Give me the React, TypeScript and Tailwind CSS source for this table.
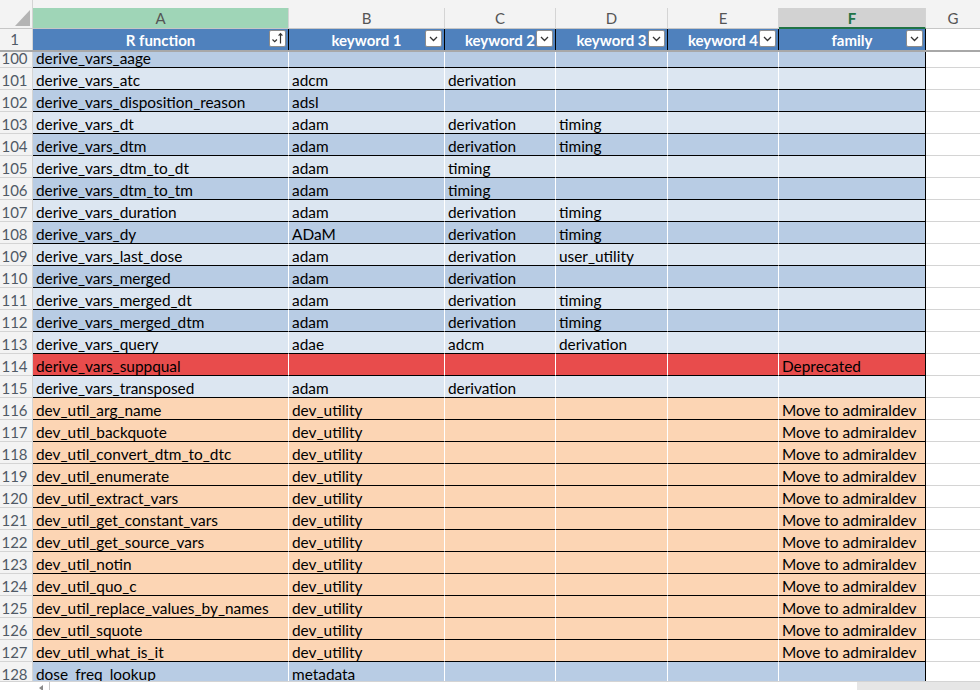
import React from 'react';

type Kind = 'dark' | 'light' | 'red' | 'peach';
type R = { n: number; a: string; b?: string; c?: string; d?: string; e?: string; f?: string; kind: Kind };

const rows: R[] = [
  { n: 101, a: 'derive_vars_atc', b: 'adcm', c: 'derivation', kind: 'light' },
  { n: 102, a: 'derive_vars_disposition_reason', b: 'adsl', kind: 'dark' },
  { n: 103, a: 'derive_vars_dt', b: 'adam', c: 'derivation', d: 'timing', kind: 'light' },
  { n: 104, a: 'derive_vars_dtm', b: 'adam', c: 'derivation', d: 'timing', kind: 'dark' },
  { n: 105, a: 'derive_vars_dtm_to_dt', b: 'adam', c: 'timing', kind: 'light' },
  { n: 106, a: 'derive_vars_dtm_to_tm', b: 'adam', c: 'timing', kind: 'dark' },
  { n: 107, a: 'derive_vars_duration', b: 'adam', c: 'derivation', d: 'timing', kind: 'light' },
  { n: 108, a: 'derive_vars_dy', b: 'ADaM', c: 'derivation', d: 'timing', kind: 'dark' },
  { n: 109, a: 'derive_vars_last_dose', b: 'adam', c: 'derivation', d: 'user_utility', kind: 'light' },
  { n: 110, a: 'derive_vars_merged', b: 'adam', c: 'derivation', kind: 'dark' },
  { n: 111, a: 'derive_vars_merged_dt', b: 'adam', c: 'derivation', d: 'timing', kind: 'light' },
  { n: 112, a: 'derive_vars_merged_dtm', b: 'adam', c: 'derivation', d: 'timing', kind: 'dark' },
  { n: 113, a: 'derive_vars_query', b: 'adae', c: 'adcm', d: 'derivation', kind: 'light' },
  { n: 114, a: 'derive_vars_suppqual', f: 'Deprecated', kind: 'red' },
  { n: 115, a: 'derive_vars_transposed', b: 'adam', c: 'derivation', kind: 'light' },
  { n: 116, a: 'dev_util_arg_name', b: 'dev_utility', f: 'Move to admiraldev', kind: 'peach' },
  { n: 117, a: 'dev_util_backquote', b: 'dev_utility', f: 'Move to admiraldev', kind: 'peach' },
  { n: 118, a: 'dev_util_convert_dtm_to_dtc', b: 'dev_utility', f: 'Move to admiraldev', kind: 'peach' },
  { n: 119, a: 'dev_util_enumerate', b: 'dev_utility', f: 'Move to admiraldev', kind: 'peach' },
  { n: 120, a: 'dev_util_extract_vars', b: 'dev_utility', f: 'Move to admiraldev', kind: 'peach' },
  { n: 121, a: 'dev_util_get_constant_vars', b: 'dev_utility', f: 'Move to admiraldev', kind: 'peach' },
  { n: 122, a: 'dev_util_get_source_vars', b: 'dev_utility', f: 'Move to admiraldev', kind: 'peach' },
  { n: 123, a: 'dev_util_notin', b: 'dev_utility', f: 'Move to admiraldev', kind: 'peach' },
  { n: 124, a: 'dev_util_quo_c', b: 'dev_utility', f: 'Move to admiraldev', kind: 'peach' },
  { n: 125, a: 'dev_util_replace_values_by_names', b: 'dev_utility', f: 'Move to admiraldev', kind: 'peach' },
  { n: 126, a: 'dev_util_squote', b: 'dev_utility', f: 'Move to admiraldev', kind: 'peach' },
  { n: 127, a: 'dev_util_what_is_it', b: 'dev_utility', f: 'Move to admiraldev', kind: 'peach' },
];

const BG: Record<Kind, string> = {
  dark: 'bg-[#b8cce4]',
  light: 'bg-[#dce6f1]',
  red: 'bg-[#e84c4c]',
  peach: 'bg-[#fcd5b4]',
};

const Chev = () => (
  <svg width="9" height="6" viewBox="0 0 9 6">
    <path d="M1 1l3.5 3.5L8 1" fill="none" stroke="#333" strokeWidth="1.3" />
  </svg>
);

const SortIcon = () => (
  <svg width="15" height="15" viewBox="0 0 15 15">
    <path d="M2.5 8.5l2.2 2.2 2.2-2.2" fill="none" stroke="#333" strokeWidth="1.2" />
    <path d="M10.5 2.5v10M8.6 4.6l1.9-2 1.9 2" fill="none" stroke="#333" strokeWidth="1.2" />
  </svg>
);

function FilterBtn({ sort }: { sort?: boolean }) {
  return (
    <div className="absolute right-[2px] top-[1px] flex h-[17px] w-[17px] items-center justify-center rounded-[2px] border border-[#8c8c8c] bg-white">
      {sort ? <SortIcon /> : <Chev />}
    </div>
  );
}

function Cell({ w, bg, text, last, compact }: { w: string; bg: string; text?: string; last?: boolean; compact?: boolean }) {
  return (
    <div
      className={`${w} ${bg} flex shrink-0 items-end overflow-hidden whitespace-nowrap border-b border-r border-b-black ${
        last ? 'border-r-black' : 'border-r-white'
      } ${compact ? 'pb-[2px] leading-[13px]' : 'pb-[1px] leading-[15px]'} pl-[3px] text-[15.4px] text-black`}
    >
      {text}
    </div>
  );
}

function RowHead({ n, compact }: { n: number; compact?: boolean }) {
  return (
    <div
      className={`flex w-[33px] shrink-0 items-end justify-center overflow-hidden border-b border-r border-[#d4d4d4] bg-[#f3f3f3] ${
        compact ? 'pb-[2px] leading-[13px]' : 'pb-[1px] leading-[15px]'
      } pr-[3px] text-[15px] text-[#505a66]`}
    >
      {n}
    </div>
  );
}

function DataRow({ r, h, compact }: { r: R; h: string; compact?: boolean }) {
  const bg = BG[r.kind];
  return (
    <div className={`flex ${h}`}>
      <RowHead n={r.n} compact={compact} />
      <Cell w="w-[256px]" bg={bg} text={r.a} compact={compact} />
      <Cell w="w-[156px]" bg={bg} text={r.b} compact={compact} />
      <Cell w="w-[111px]" bg={bg} text={r.c} compact={compact} />
      <Cell w="w-[112px]" bg={bg} text={r.d} compact={compact} />
      <Cell w="w-[111px]" bg={bg} text={r.e} compact={compact} />
      <Cell w="w-[147px]" bg={bg} text={r.f} last compact={compact} />
      <div className="flex-1 border-b border-[#d4d4d4] bg-white" />
    </div>
  );
}

function HeadCell({ w, text, sort }: { w: string; text: string; sort?: boolean }) {
  return (
    <div className={`${w} relative flex shrink-0 items-center justify-center border-r border-black bg-[#4f81bd] text-[15px] font-bold leading-[20px] text-white`}>
      {text}
      <FilterBtn sort={sort} />
    </div>
  );
}

function ColLetter({ w, l, kind }: { w: string; l: string; kind?: 'sel' | 'act' }) {
  if (kind === 'sel') {
    return (
      <div className={`${w} flex h-[21px] shrink-0 items-center justify-center border-b border-r border-b-[#c6c6c6] border-r-[#d4d4d4] bg-[#9fd5b7] text-[15px] text-[#555]`}>
        {l}
      </div>
    );
  }
  if (kind === 'act') {
    return (
      <div className={`${w} flex h-[21px] shrink-0 items-center justify-center border-b-2 border-r border-b-[#217346] border-r-[#d4d4d4] bg-[#d2d2d2] pt-[1px] text-[15px] font-bold text-[#217346]`}>
        {l}
      </div>
    );
  }
  return (
    <div className={`${w} flex h-[21px] shrink-0 items-center justify-center border-b border-r border-b-[#c6c6c6] border-r-[#d4d4d4] text-[15px] text-[#555]`}>
      {l}
    </div>
  );
}

export default function App() {
  return (
    <div className="h-[690px] w-[980px] overflow-hidden bg-white font-['Lato',sans-serif]">
      {/* column letters */}
      <div className="flex h-[29px] items-end bg-[#f3f3f3]">
        <div className="relative flex h-[29px] w-[33px] shrink-0 items-end border-b border-r border-b-[#c6c6c6] border-r-[#d4d4d4]">
          <svg width="33" height="28" viewBox="0 0 33 28" className="absolute left-0 top-0">
            <path d="M15 26 L30 26 L30 10 Z" fill="#b4b4b4" />
          </svg>
        </div>
        <ColLetter w="w-[256px]" l="A" kind="sel" />
        <ColLetter w="w-[156px]" l="B" />
        <ColLetter w="w-[111px]" l="C" />
        <ColLetter w="w-[112px]" l="D" />
        <ColLetter w="w-[111px]" l="E" />
        <ColLetter w="w-[147px]" l="F" kind="act" />
        <div className="flex h-[21px] flex-1 items-center justify-center border-b border-[#c6c6c6] text-[15px] text-[#555]">G</div>
      </div>

      {/* table header row 1 */}
      <div className="flex h-[23px] border-b-2 border-[#a8a8a8]">
        <div className="flex w-[33px] shrink-0 items-center justify-center border-r border-[#d4d4d4] bg-[#f3f3f3] pr-[3px] text-[15px] text-[#505a66]">1</div>
        <HeadCell w="w-[256px]" text="R function" sort />
        <HeadCell w="w-[156px]" text="keyword 1" />
        <HeadCell w="w-[111px]" text="keyword 2" />
        <HeadCell w="w-[112px]" text="keyword 3" />
        <HeadCell w="w-[111px]" text="keyword 4" />
        <HeadCell w="w-[147px]" text="family" />
        <div className="flex-1 bg-white" />
      </div>

      <DataRow r={{ n: 100, a: 'derive_vars_aage', kind: 'dark' }} h="h-[16px]" compact />
      {rows.map((r) => (
        <DataRow key={r.n} r={r} h="h-[22px]" />
      ))}
      <div className="flex h-[19px]">
        <div className="flex w-[33px] shrink-0 items-start justify-center overflow-hidden border-r border-[#d4d4d4] bg-[#f3f3f3] pr-[3px] pt-[5px] text-[15px] leading-[14px] text-[#505a66]">128</div>
        <div className="flex w-[256px] shrink-0 items-start overflow-hidden border-r border-white bg-[#b8cce4] pl-[3px] pt-[5px] text-[15.4px] leading-[14px]">dose_freq_lookup</div>
        <div className="flex w-[156px] shrink-0 items-start overflow-hidden border-r border-white bg-[#b8cce4] pl-[3px] pt-[5px] text-[15.4px] leading-[14px]">metadata</div>
        <div className="w-[111px] shrink-0 border-r border-white bg-[#b8cce4]" />
        <div className="w-[112px] shrink-0 border-r border-white bg-[#b8cce4]" />
        <div className="w-[111px] shrink-0 border-r border-white bg-[#b8cce4]" />
        <div className="w-[147px] shrink-0 border-r border-black bg-[#b8cce4]" />
        <div className="flex-1 bg-white" />
      </div>

      {/* bottom scrollbar strip */}
      <div className="flex h-[9px] border-t border-[#d4d4d4] bg-white">
        <div className="w-[33px] shrink-0" />
        <div className="flex w-[17px] shrink-0 justify-center border-r border-[#c8c8c8] pt-[3px]">
          <svg width="6" height="6" viewBox="0 0 6 6">
            <path d="M5 0 L1 3 L5 6 Z" fill="#8a8a8a" />
          </svg>
        </div>
        <div className="w-[807px] shrink-0" />
        <div className="flex-1 bg-[#e6e6e6]" />
      </div>
    </div>
  );
}
